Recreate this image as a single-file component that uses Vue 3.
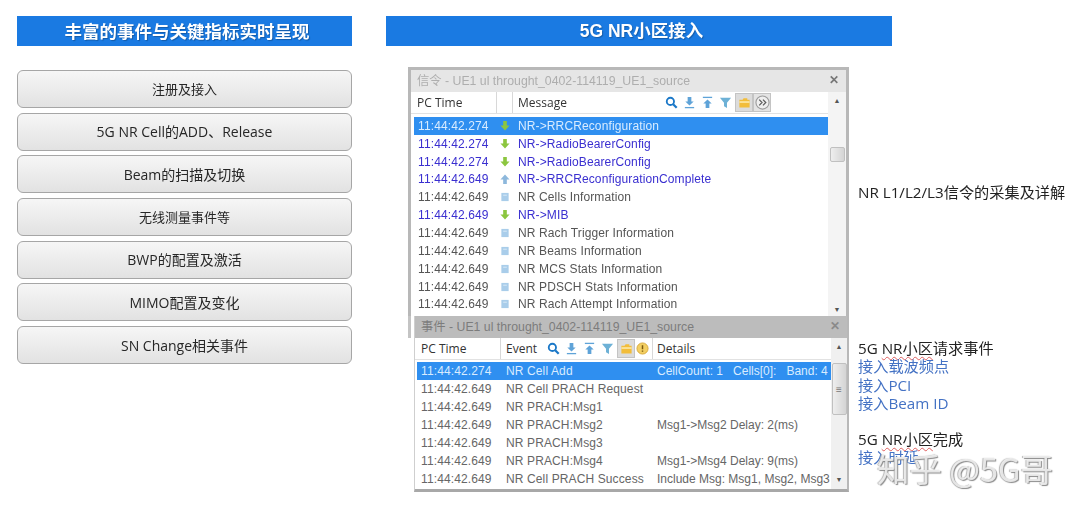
<script setup>
const features = [
  { text: "注册及接入", cjk: true },
  { text: "5G NR Cell的ADD、Release" },
  { text: "Beam的扫描及切换" },
  { text: "无线测量事件等", cjk: true },
  { text: "BWP的配置及激活" },
  { text: "MIMO配置及变化" },
  { text: "SN Change相关事件" },
];

const messages = [
  { time: "11:44:42.274", icon: "down", text: "NR->RRCReconfiguration", selected: true },
  { time: "11:44:42.274", icon: "down", text: "NR->RadioBearerConfig", air: true },
  { time: "11:44:42.274", icon: "down", text: "NR->RadioBearerConfig", air: true },
  { time: "11:44:42.649", icon: "up", text: "NR->RRCReconfigurationComplete", air: true },
  { time: "11:44:42.649", icon: "doc", text: "NR Cells Information" },
  { time: "11:44:42.649", icon: "down", text: "NR->MIB", air: true },
  { time: "11:44:42.649", icon: "doc", text: "NR Rach Trigger Information" },
  { time: "11:44:42.649", icon: "doc", text: "NR Beams Information" },
  { time: "11:44:42.649", icon: "doc", text: "NR MCS Stats Information" },
  { time: "11:44:42.649", icon: "doc", text: "NR PDSCH Stats Information" },
  { time: "11:44:42.649", icon: "doc", text: "NR Rach Attempt Information" },
];

const events = [
  { time: "11:44:42.274", name: "NR Cell Add", details: "CellCount: 1   Cells[0]:   Band: 4", selected: true },
  { time: "11:44:42.649", name: "NR Cell PRACH Request", details: "" },
  { time: "11:44:42.649", name: "NR PRACH:Msg1", details: "" },
  { time: "11:44:42.649", name: "NR PRACH:Msg2", details: "Msg1->Msg2 Delay: 2(ms)" },
  { time: "11:44:42.649", name: "NR PRACH:Msg3", details: "" },
  { time: "11:44:42.649", name: "NR PRACH:Msg4", details: "Msg1->Msg4 Delay: 9(ms)" },
  { time: "11:44:42.649", name: "NR Cell PRACH Success", details: "Include Msg: Msg1, Msg2, Msg3" },
];
</script>

<template>
  <div class="page">
    <!-- 左侧 -->
    <section class="left">
      <h2 class="banner">丰富的事件与关键指标实时呈现</h2>
      <div class="features">
        <div
          v-for="item in features"
          :key="item.text"
          class="feature"
          :class="{ cjk: item.cjk }"
        >
          {{ item.text }}
        </div>
      </div>
    </section>

    <!-- 右侧 -->
    <section class="right">
      <h2 class="banner banner-wide">5G NR小区接入</h2>
      <div class="content">
        <div class="windows">
          <!-- 信令窗口 -->
          <div class="win win-msg">
            <div class="win-title">
              <span>信令 - UE1 ul throught_0402-114119_UE1_source</span>
              <span class="close">✕</span>
            </div>
            <div class="win-body">
              <div class="win-main">
                <div class="thead">
                  <span class="th th-time">PC Time</span>
                  <span class="th th-icon"></span>
                  <span class="th th-msg">Message</span>
                  <span class="tools">
                    <svg class="tool" viewBox="0 0 14 14"><circle cx="5.8" cy="5.8" r="3.9" fill="none" stroke="#1b78c8" stroke-width="2" /><path d="M8.8 8.8L12.6 12.6" stroke="#1b78c8" stroke-width="2.4" /></svg>
                    <svg class="tool" viewBox="0 0 14 14"><path d="M5 1h4v5h2.5L7 10.2 2.5 6H5z" fill="#5fa3d8" /><path d="M2 12.5h10" stroke="#5fa3d8" stroke-width="1.4" /></svg>
                    <svg class="tool" viewBox="0 0 14 14"><path d="M2 1.5h10" stroke="#5fa3d8" stroke-width="1.4" /><path d="M5 13h4V8h2.5L7 3.8 2.5 8H5z" fill="#5fa3d8" /></svg>
                    <svg class="tool" viewBox="0 0 14 14"><path d="M1 2h12L8.6 7.2V13L5.4 11V7.2z" fill="#6db1d6" /></svg>
                    <span class="toggle"><svg class="tool" viewBox="0 0 14 14"><path d="M1.5 4h3.5l1-1.6h4V4h2.5v8.5h-11z" fill="#f2bd3a" /><path d="M1.5 5.5h11v2h-11z" fill="#fbe39a" /></svg></span>
                    <span class="toggle toggle-more"><svg class="tool tool-more" viewBox="0 0 16 16"><circle cx="8" cy="8" r="7" fill="#efefef" stroke="#9c9c9c" stroke-width="1.2" /><path d="M4.5 5l3 3-3 3M8.5 5l3 3-3 3" fill="none" stroke="#5a5a5a" stroke-width="1.3" /></svg></span>
                  </span>
                </div>
                <div class="rows rows-msg">
                  <div
                    v-for="(row, i) in messages"
                    :key="i"
                    class="row"
                    :class="{ selected: row.selected, air: row.air }"
                  >
                    <span class="c-time">{{ row.time }}</span>
                    <span class="c-icon">
                      <svg v-if="row.icon === 'down'" viewBox="0 0 10 11"><path d="M3 0h4v5h3L5 10.5 0 5h3z" fill="#8cc63f" /></svg>
                      <svg v-else-if="row.icon === 'up'" viewBox="0 0 10 11"><path d="M3 11h4V6h3L5 .5 0 6h3z" fill="#8db8dc" /></svg>
                      <svg v-else viewBox="0 0 10 11"><rect x="1" y="1" width="8" height="9" fill="#a9cdea" /><rect x="3" y="3" width="4" height="1" fill="#dcebf6" /></svg>
                    </span>
                    <span class="c-msg">{{ row.text }}</span>
                  </div>
                </div>
              </div>
              <div class="scroll">
                <span class="arrow">▲</span>
                <span class="thumb thumb-small"></span>
                <span class="arrow arrow-end arrow-low">▼</span>
              </div>
            </div>
          </div>

          <!-- 事件窗口 -->
          <div class="win win-evt">
            <div class="win-title win-title-dark">
              <span>事件 - UE1 ul throught_0402-114119_UE1_source</span>
              <span class="close">✕</span>
            </div>
            <div class="win-body">
              <div class="win-main">
                <div class="thead">
                  <span class="th th-etime">PC Time</span>
                  <span class="th th-event">
                    Event
                    <span class="tools tools-inline">
                      <svg class="tool" viewBox="0 0 14 14"><circle cx="5.8" cy="5.8" r="3.9" fill="none" stroke="#1b78c8" stroke-width="2" /><path d="M8.8 8.8L12.6 12.6" stroke="#1b78c8" stroke-width="2.4" /></svg>
                      <svg class="tool" viewBox="0 0 14 14"><path d="M5 1h4v5h2.5L7 10.2 2.5 6H5z" fill="#5fa3d8" /><path d="M2 12.5h10" stroke="#5fa3d8" stroke-width="1.4" /></svg>
                      <svg class="tool" viewBox="0 0 14 14"><path d="M2 1.5h10" stroke="#5fa3d8" stroke-width="1.4" /><path d="M5 13h4V8h2.5L7 3.8 2.5 8H5z" fill="#5fa3d8" /></svg>
                      <svg class="tool" viewBox="0 0 14 14"><path d="M1 2h12L8.6 7.2V13L5.4 11V7.2z" fill="#6db1d6" /></svg>
                      <span class="toggle"><svg class="tool" viewBox="0 0 14 14"><path d="M1.5 4h3.5l1-1.6h4V4h2.5v8.5h-11z" fill="#f2bd3a" /><path d="M1.5 5.5h11v2h-11z" fill="#fbe39a" /></svg></span>
                      <svg class="tool" viewBox="0 0 14 14"><circle cx="7" cy="7" r="6" fill="#f3cf62" stroke="#d8a93a" /><path d="M7 3.5v4.2M7 9.2v1.4" stroke="#7a5a10" stroke-width="1.6" /></svg>
                    </span>
                  </span>
                  <span class="th th-details">Details</span>
                </div>
                <div class="rows rows-evt">
                  <div
                    v-for="(row, i) in events"
                    :key="i"
                    class="row row-evt"
                    :class="{ selected: row.selected }"
                  >
                    <span class="e-time">{{ row.time }}</span>
                    <span class="e-name">{{ row.name }}</span>
                    <span class="e-details">{{ row.details }}</span>
                  </div>
                </div>
              </div>
              <div class="scroll scroll-evt">
                <span class="arrow">▲</span>
                <span class="thumb thumb-big">≡</span>
                <span class="arrow arrow-end">▼</span>
              </div>
            </div>
          </div>
        </div>

        <!-- 说明文字 -->
        <div class="notes">
          <p class="note-top">NR L1/L2/L3信令的采集及详解</p>
          <div class="note-group">
            <p>5G <span class="squiggle">NR小区</span>请求事件</p>
            <p class="blue">接入载波频点</p>
            <p class="blue">接入PCI</p>
            <p class="blue">接入Beam ID</p>
          </div>
          <div class="note-group note-second">
            <p>5G <span class="squiggle">NR小区</span>完成</p>
            <p class="blue">接入时延</p>
          </div>
        </div>
      </div>
    </section>

    <div class="watermark">知乎 @5G哥</div>
  </div>
</template>

<style>
html,
body {
  margin: 0;
  background: #fff;
}
</style>

<style scoped>
.page {
  position: relative;
  width: 1080px;
  height: 518px;
  overflow: hidden;
  display: flex;
  gap: 34px;
  padding: 16px 0 0 17px;
  box-sizing: border-box;
  font-family: "Liberation Sans", "Noto Sans CJK SC", sans-serif;
  color: #333;
  filter: blur(0.3px);
}

.left {
  width: 335px;
}

.banner {
  margin: 0;
  height: 30px;
  line-height: 30px;
  padding-left: 5px;
  background: #1a7ae2;
  color: #fff;
  text-align: center;
  font-family: "Noto Sans CJK SC", sans-serif;
  font-size: 17.5px;
  font-weight: 700;
  text-shadow: 1px 1px 1px rgba(0, 0, 0, 0.25);
  box-sizing: border-box;
}

.banner-wide {
  width: 506px;
  font-family: "Liberation Sans", "Noto Sans CJK SC", sans-serif;
}

/* 左侧按钮 */
.features {
  margin-top: 24px;
  display: flex;
  flex-direction: column;
  gap: 4.7px;
}

.feature {
  height: 38px;
  box-sizing: border-box;
  display: flex;
  align-items: center;
  justify-content: center;
  padding-bottom: 1px;
  border: 1px solid #a6a6a6;
  border-radius: 6px;
  background: linear-gradient(#f6f6f6, #e2e2e2);
  font-family: "Open Sans", "Noto Sans CJK SC", sans-serif;
  font-size: 14px;
  color: #262626;
}

.feature.cjk {
  font-size: 13px;
}

/* 右侧 */
.content {
  display: flex;
  margin-top: 21px;
  margin-left: 22px;
}

.windows {
  width: 441px;
  display: flex;
  flex-direction: column;
}

.win {
  box-sizing: border-box;
  background: #fff;
}

.win-msg {
  height: 249px;
  border: 3px solid #b8b8b8;
  border-bottom: none;
  overflow: hidden;
}

.win-evt {
  position: relative;
  margin-left: 6px;
  height: 176px;
  border-right: 2px solid #b8b8b8;
  border-bottom: 3px solid #a8a8a8;
  border-left: 1px solid #cfcfcf;
}

/* 上层窗口露出的一截边框 */
.win-evt::before {
  content: "";
  position: absolute;
  left: -7px;
  top: 0;
  width: 3px;
  height: 22px;
  background: #c4c4c4;
}

.win-title {
  height: 22px;
  padding: 0 7px 2px 6px;
  box-sizing: border-box;
  display: flex;
  align-items: center;
  justify-content: space-between;
  background: #e6e6e6;
  color: #aeaeae;
  font-size: 12.3px;
}

.win-title-dark {
  background: #bcbcbc;
  color: #7c7c7c;
}

.close {
  font-size: 12px;
  font-weight: 700;
  color: #777;
}

.win-title-dark .close {
  color: #8a8a8a;
}

.win-body {
  display: flex;
  height: calc(100% - 22px);
}

.win-main {
  flex: 1;
  min-width: 0;
}

.thead {
  height: 22px;
  display: flex;
  align-items: center;
  border-bottom: 1px solid #e2e2e2;
  box-sizing: border-box;
  font-family: "Open Sans", sans-serif;
  font-size: 12px;
  color: #333;
}

.th {
  height: 100%;
  display: flex;
  align-items: center;
  box-sizing: border-box;
  border-right: 1px solid #d8d8d8;
}

.th-time {
  width: 86px;
  padding-left: 6px;
}

.th-icon {
  width: 16px;
}

.th-msg {
  border-right: none;
  padding-left: 5px;
  width: 152px;
}

.th-etime {
  width: 86px;
  padding-left: 6px;
}

.th-event {
  width: 152px;
  padding-left: 5px;
}

.th-details {
  border-right: none;
  padding-left: 4px;
}

.tools {
  height: 100%;
  display: flex;
  align-items: center;
  gap: 5px;
}

.tools-inline {
  margin-left: 10px;
}

.tool {
  width: 13px;
  height: 13px;
  flex: none;
}

.tool-more {
  width: 15px;
  height: 15px;
}

.toggle {
  width: 18px;
  height: 19px;
  margin-left: -2px;
  flex: none;
  display: flex;
  align-items: center;
  justify-content: center;
  background: #dcdcdc;
  border: 1px solid #c4c4c4;
  box-sizing: border-box;
}

.toggle-more {
  margin-left: -5px;
  background: #e4e4e4;
}

.tools-inline .toggle {
  margin-right: -4px;
}

.rows {
  padding-top: 3px;
}

.rows-msg {
  padding-left: 3px;
}

.rows-evt {
  padding-top: 2px;
  padding-left: 2px;
}

.row {
  height: 17.85px;
  display: flex;
  align-items: center;
  font-size: 12px;
  letter-spacing: 0.12px;
  color: #555;
  white-space: pre;
  overflow: hidden;
}

.row.air {
  color: #3a2fd0;
}

.row.selected {
  background: #2f8ff0;
  color: #d9ecff;
}

.c-time {
  width: 83px;
  padding-left: 4px;
  box-sizing: border-box;
}

.c-icon {
  width: 16px;
  display: flex;
  justify-content: center;
}

.c-icon svg {
  width: 10px;
  height: 10px;
}

.c-msg {
  padding-left: 5px;
}

.row-evt {
  height: 18px;
  color: #666;
}

.e-time {
  flex: none;
  width: 89px;
  padding-left: 4px;
  box-sizing: border-box;
}

.e-name {
  flex: none;
  width: 151px;
  box-sizing: border-box;
}

.e-details {
  letter-spacing: 0;
}

.scroll {
  width: 18px;
  flex: none;
  display: flex;
  flex-direction: column;
  align-items: center;
  background: #f4f4f4;
}

.scroll-evt {
  width: 16px;
  background: #f0f0f0;
}

.arrow {
  font-size: 7px;
  line-height: 18px;
  color: #555;
}

.arrow-end {
  margin-top: auto;
}

.arrow-low {
  margin-bottom: -3px;
}

.thumb {
  width: 15px;
  box-sizing: border-box;
  border: 1px solid #c0c0c0;
  border-radius: 2px;
  background: linear-gradient(90deg, #eee, #d4d4d4);
}

.thumb-small {
  height: 15px;
  margin-top: 37px;
}

.thumb-big {
  height: 52px;
  margin-top: 7px;
  display: flex;
  align-items: center;
  justify-content: center;
  font-size: 10px;
  color: #777;
}

/* 说明文字 */
.notes {
  margin-left: 9px;
  width: 222px;
  font-family: "Open Sans", "Noto Sans CJK SC", sans-serif;
  font-size: 15.2px;
  line-height: 18.2px;
  color: #222;
}

.notes p {
  margin: 0;
  white-space: nowrap;
}

.note-top {
  padding-top: 116px;
}

.note-group {
  margin-top: 138px;
}

.note-second {
  margin-top: 18px;
}

.blue {
  color: #4472c4;
}

.squiggle {
  text-decoration: underline wavy #e06060 1px;
  text-underline-offset: 2px;
}

.watermark {
  position: absolute;
  right: 27px;
  bottom: 27px;
  font-family: "Noto Sans CJK SC", sans-serif;
  font-size: 32.5px;
  color: rgba(245, 245, 245, 0.85);
  text-shadow: 1px 1px 1px #8a8a8a, -1px 0 1px #b5b5b5;
}
</style>
